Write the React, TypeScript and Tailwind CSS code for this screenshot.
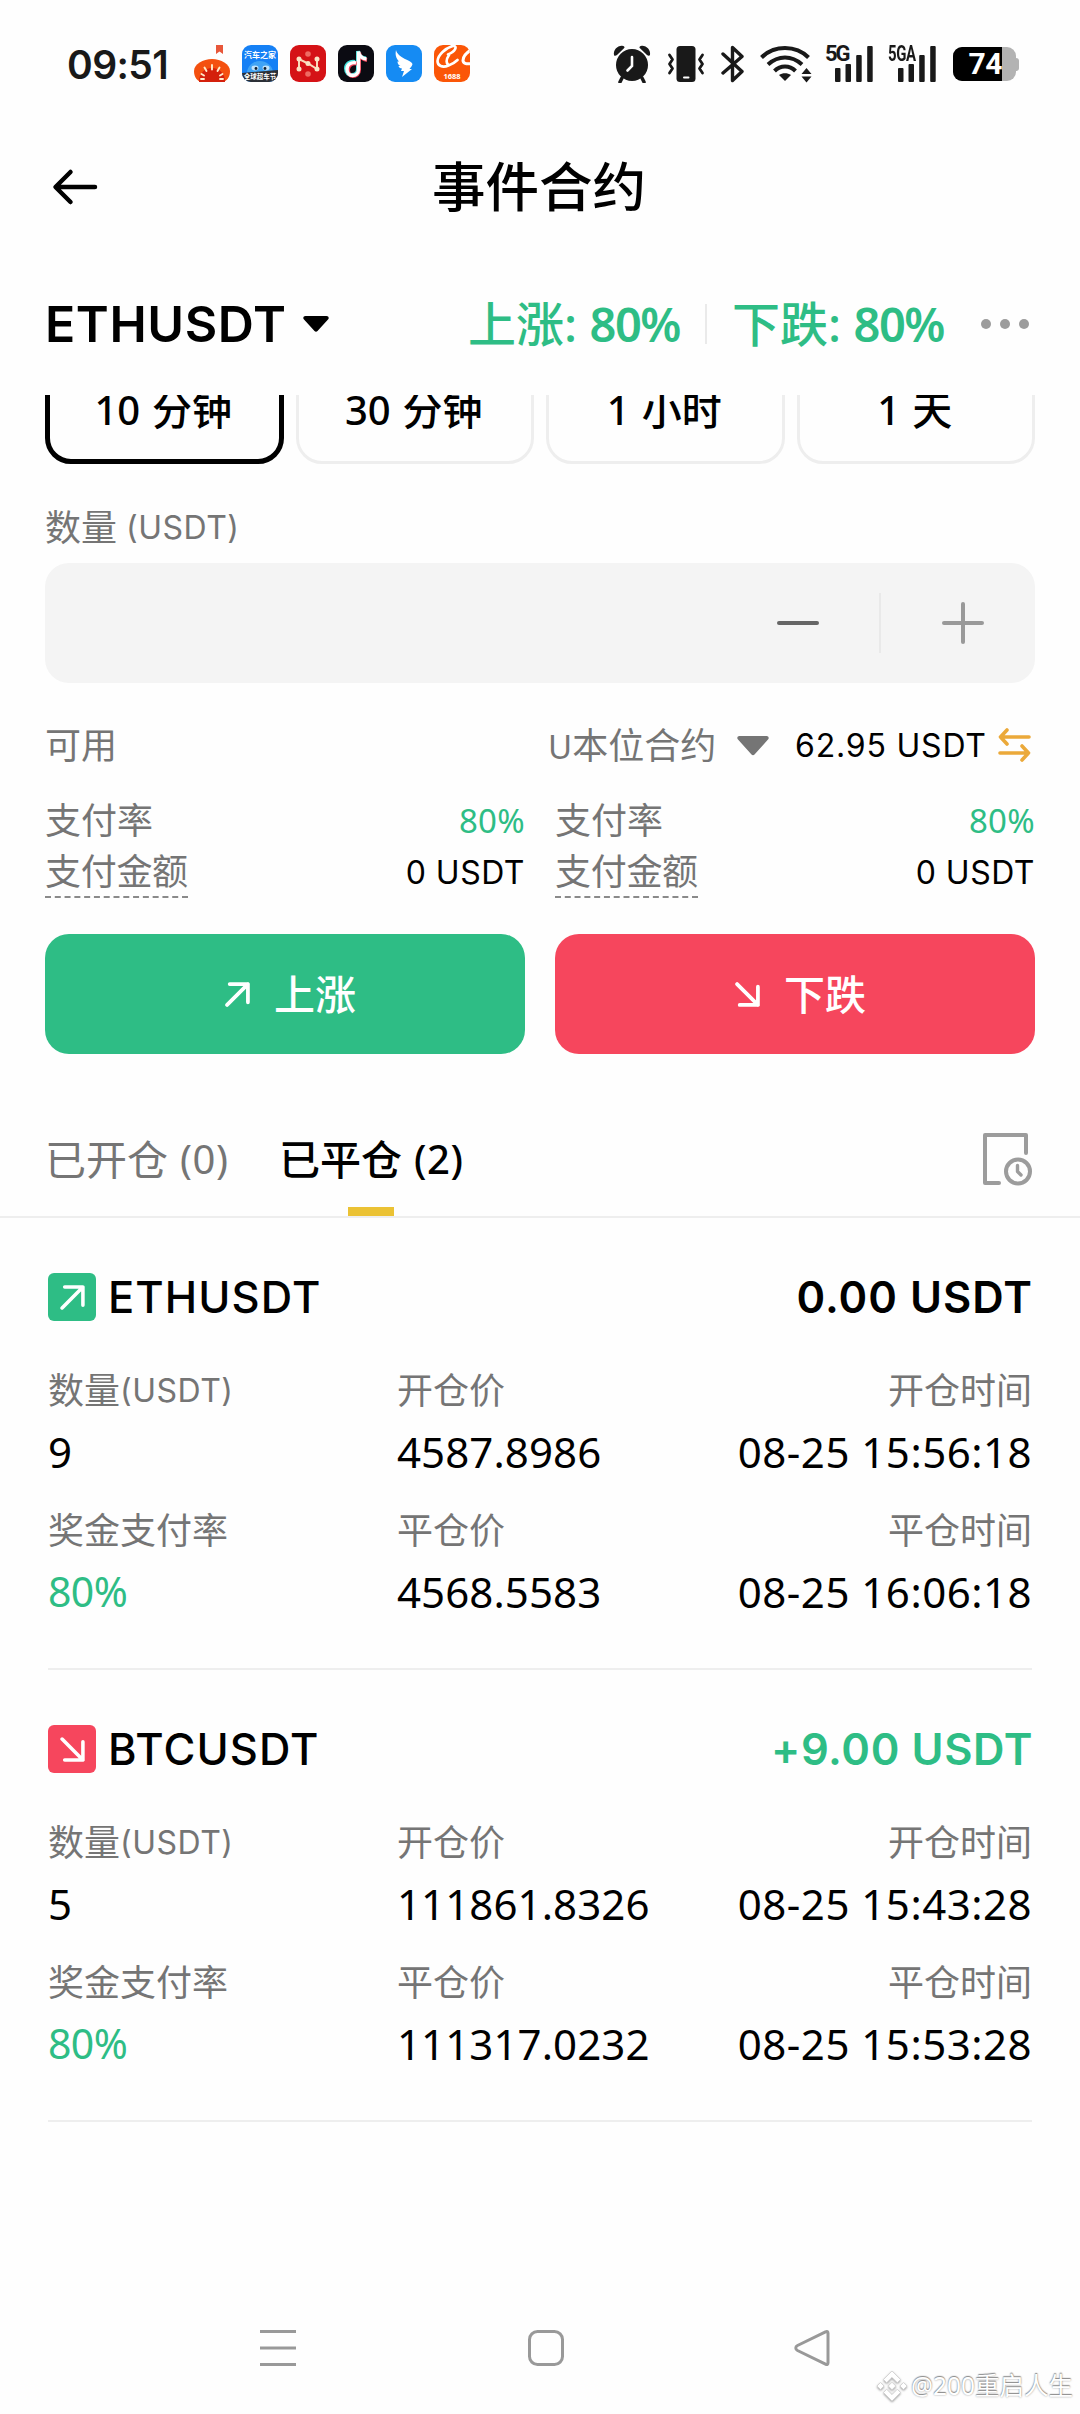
import React from 'react';

function AppIcons() {
  return (
    <div className="flex gap-3">
      <svg width="36" height="38" viewBox="0 0 36 38">
        <path d="M22 0h7v9l-3.500-2.500L22 9z" fill="#e8573a" />
        <path d="M18 14C27 14 36 19 36 26c0 6-3 11-9 11H9c-6 0-9-5-9-11 0-7 9-12 18-12z" fill="#f4500f" />
        <path d="M5 37c0-9 6-14 13-14s13 5 13 14z" fill="#d4200c" />
        <path d="M18 20v4.500M10.500 22.500l2 3.500M25.500 22.500l-2 3.500M7.500 29l2.500 1.500M28.500 29l-2.500 1.500M7 34h3M29 34h-3" stroke="#ffeccb" strokeWidth="1.900" strokeLinecap="round" />
      </svg>
      <div className="relative h-[37px] w-9 overflow-hidden rounded-[9px] bg-[#1580f5]">
        <svg className="absolute inset-0" width="36" height="37" viewBox="0 0 36 37">
          <path d="M5 27c1-7 7-11 13-11s12 4 13 11z" fill="#3fa3f5" />
          <ellipse cx="13" cy="23" rx="3.500" ry="2.400" fill="#bfe2fb" />
          <ellipse cx="24" cy="23" rx="3.500" ry="2.400" fill="#bfe2fb" />
          <circle cx="14" cy="23.500" r="1.400" fill="#112233" />
          <circle cx="23" cy="23.500" r="1.400" fill="#112233" />
          <path d="M0 28l36-3v12H0z" fill="#2b2f36" />
        </svg>
        <div className="absolute inset-x-0 top-[5px] text-center text-[8px] leading-[10px] font-bold whitespace-nowrap text-white">汽车之家</div>
        <div className="absolute inset-x-0 bottom-[1px] text-center text-[6.500px] leading-[8px] font-bold whitespace-nowrap text-white">全球超车节</div>
      </div>
      <svg width="36" height="37" viewBox="0 0 36 37">
        <rect width="36" height="37" rx="9" fill="#d51216" />
        <path d="M9 24V14l9 4.500 9 5.500V14" fill="none" stroke="#f9d9b8" strokeWidth="2" />
        <g fill="#fbe3c4">
          <circle cx="9" cy="14" r="2.500" /><circle cx="9" cy="24" r="2.500" /><circle cx="18" cy="18.500" r="2.500" />
          <circle cx="27" cy="24" r="2.500" /><circle cx="27" cy="14" r="2.500" />
        </g>
        <circle cx="18" cy="9" r="2.800" fill="#ee6b63" />
        <circle cx="18" cy="29" r="2.800" fill="#ee6b63" />
      </svg>
      <svg width="36" height="37" viewBox="0 0 36 37">
        <rect width="36" height="37" rx="9" fill="#0b0b12" />
        <g fill="none" strokeWidth="4">
          <path d="M17 17c-5-1-9 2-9 6.500S11 30 14 30s6-2 6-6V6c.5 4 3.500 7 8 7.500" stroke="#40e0dc" />
          <path d="M19 18.500c-5-1-9 2-9 6S12 31 15 31s6-2 6-6V7.500c.5 4 4 7 8 7.500" stroke="#f0445a" />
          <path d="M18 17.800c-5-1-9 2-9 6.200S11.500 30.500 14.500 30.500s6-2 6-6V6.500c.5 4 3.500 7 8 7.500" stroke="#fff" strokeWidth="3.400" />
        </g>
      </svg>
      <svg width="36" height="37" viewBox="0 0 36 37">
        <rect width="36" height="37" rx="9" fill="#158bf3" />
        <path d="M10 5c1 4 4 6 9 9 4 2 7 3 7.500 5-.5 2-1.800 3.500-3 5h2.500L16 32l2-6h-3l1-2.500c-2 0-3-1-3.500-2.500h2c-2-1-3-2.500-3-4.500h1.500C10 13 9 10 10 5z" fill="#fff" />
      </svg>
      <div className="relative h-[37px] w-9 overflow-hidden rounded-[9px] bg-[#fb5607]">
        <svg className="absolute inset-0" width="36" height="37" viewBox="0 0 36 37" fill="none" stroke="#fff" strokeLinecap="round">
          <path d="M20 .5C11 3 4 10 3.500 16c0 5 5 7 11 4.500 4-1.500 7-3.500 9-5.500" strokeWidth="2.600" />
          <path d="M20 1c3 .5 2 5-6 8.500M15 10c-2 3-3.500 7-1 9.500" strokeWidth="2.600" />
          <path d="M37 5c-5 3-8 7-8 10.500 0 2.500 3 4 8 3" strokeWidth="3" />
        </svg>
        <div className="absolute inset-x-0 bottom-[1px] text-center text-[7.500px] leading-[10px] font-bold text-white">1688</div>
      </div>
    </div>
  );
}

function Signal({ label, labelClass }: { label: string; labelClass: string }) {
  return (
    <div className="relative h-[38px] w-[49px]">
      <span className={labelClass}>{label}</span>
      <svg className="absolute inset-0" width="49" height="38" viewBox="0 0 49 38" fill="#191919">
        <rect x="10" y="23" width="5.500" height="14" rx="1" />
        <rect x="20.500" y="19" width="5.500" height="18" rx="1" />
        <rect x="31.200" y="10" width="5.500" height="27" rx="1" />
        <rect x="42.200" y="1" width="5.500" height="36" rx="1" />
      </svg>
    </div>
  );
}

function StatusBar() {
  return (
    <div className="flex h-32 shrink-0 items-center pl-[67px] text-[#191919]">
      <div className="w-[127px] font-[Inter] text-[39px] leading-none font-semibold tracking-[-0.6px]">09:51</div>
      <AppIcons />
      <svg className="ml-[143px]" width="38" height="38" viewBox="0 0 38 38" fill="#191919">
        <path d="M1 10C0 5 5 0 10 1c1.500.3 2 1.500 1 2.300L4 10C2.800 11 1.300 11.200 1 10zM37 10C38 5 33 0 28 1c-1.500.3-2 1.500-1 2.300L34 10c1.200 1 2.700.8 3 0z" />
        <circle cx="19" cy="20" r="16" />
        <path d="M9 33l-2 4M29 33l2 4" stroke="#191919" strokeWidth="3.500" strokeLinecap="round" />
        <path d="M19 12v9l-4.500 4.500" fill="none" stroke="#fff" strokeWidth="2.600" strokeLinecap="round" />
      </svg>
      <svg className="ml-4" width="38" height="38" viewBox="0 0 38 38">
        <rect x="9.500" y="1" width="19" height="36" rx="3.500" fill="#191919" />
        <rect x="16" y="31.500" width="6.500" height="2" rx="1" fill="#fff" />
        <path d="M2.500 10l3 4.500L2.500 19l3 4.500L2.500 28M35.500 10l-3 4.500 3 4.500-3 4.500 3 4.500" fill="none" stroke="#191919" strokeWidth="2.800" strokeLinecap="round" strokeLinejoin="round" />
      </svg>
      <svg className="ml-4" width="24" height="38" viewBox="0 0 24 38">
        <path d="M2 9l19 17.500-9.500 9V2.500l9.500 9L2 28" fill="none" stroke="#191919" strokeWidth="3.400" strokeLinecap="round" strokeLinejoin="round" />
      </svg>
      <svg className="ml-[15px]" width="52" height="38" viewBox="0 0 52 38">
        <g fill="none" stroke="#191919" strokeWidth="4">
          <path d="M1.500 12.500C8 6 16 3 25 3s17 3 23.500 9.500" />
          <path d="M8 19.500c5-4.500 10.500-7 17-7s12 2.500 17 7" />
          <path d="M14.500 26c3-3 6.500-4.500 10.500-4.500s7.500 1.500 10.500 4.500" />
        </g>
        <path d="M25 36l-6-6c3.500-2.500 8.500-2.500 12 0z" fill="#191919" />
        <path d="M41.500 29l5-6 5 6zM41.500 31.500l5 6 5-6z" fill="#191919" />
      </svg>
      <div className="ml-[13px]">
        <Signal label="5G" labelClass="absolute left-0 top-0 font-[Roboto] text-[22px] leading-[18px] font-bold tracking-[-2px]" />
      </div>
      <div className="ml-[14px]">
        <Signal label="5GA" labelClass="absolute left-0 top-0 inline-block origin-left scale-x-[0.680] font-[Roboto] text-[22px] leading-[18px] font-bold tracking-[-0.5px]" />
      </div>
      <div className="ml-4 flex items-center">
        <div className="relative h-[34px] w-[63px] overflow-hidden rounded-[9px] bg-[#b3b3b3]">
          <div className="flex h-full w-[49px] items-center justify-end bg-black font-[Roboto] text-[30px] leading-none font-bold tracking-[-0.5px] text-white">74</div>
        </div>
        <div className="h-[13px] w-[3px] rounded-r-[3px] bg-[#b3b3b3]" />
      </div>
    </div>
  );
}

function Header() {
  return (
    <div className="flex h-[118px] shrink-0 items-center pl-[52px]">
      <svg width="46" height="38" viewBox="0 0 46 38" fill="none" stroke="#000" strokeWidth="4.500" strokeLinecap="round" strokeLinejoin="round">
        <path d="M43 19H4M18.500 4L3.500 19l15 15" />
      </svg>
      <h1 className="ml-[334px] text-[53.500px] leading-none font-medium">事件合约</h1>
    </div>
  );
}

function PairRow() {
  return (
    <div className="flex h-[149px] shrink-0 items-center pt-[7px]">
      <div className="ml-[45px] w-[258px] font-[Inter] text-[50px] leading-none font-semibold tracking-[0.6px]">ETHUSDT</div>
      <svg width="26" height="16" viewBox="0 0 26 16">
        <path d="M2.500 0h21c2 0 3 2 1.500 3.500L14.500 15c-.8 1-2.200 1-3 0L1 3.500C-.5 2 .5 0 2.500 0z" fill="#000" />
      </svg>
      <div className="ml-[139px] w-[237px] text-[48px] leading-none font-medium whitespace-nowrap text-[#2ebd85]">
        上涨: <span className="text-[47px] font-semibold tracking-[-1.500px]">80%</span>
      </div>
      <div className="h-10 w-[2px] bg-[#eaeaea]" />
      <div className="ml-[25px] w-[249px] text-[48px] leading-none font-medium whitespace-nowrap text-[#2ebd85]">
        下跌: <span className="text-[47px] font-semibold tracking-[-1.500px]">80%</span>
      </div>
      <div className="flex gap-[9px]">
        <i className="size-[10px] rounded-full bg-[#9c9c9c]" />
        <i className="size-[10px] rounded-full bg-[#9c9c9c]" />
        <i className="size-[10px] rounded-full bg-[#9c9c9c]" />
      </div>
    </div>
  );
}

const durations = ['10 分钟', '30 分钟', '1 小时', '1 天'];

function Durations() {
  return (
    <div className="h-[69px] shrink-0 overflow-hidden px-[45px]">
      <div className="-mt-[37px] grid grid-cols-4 gap-3">
        {durations.map((d, i) => (
          <div
            key={d}
            className={
              'flex h-[106px] items-center justify-center rounded-[26px] pr-[2px] pb-[3px] text-[40px] leading-none font-medium [word-spacing:1.500px] ' +
              (i === 0 ? 'border-[5px] border-black' : 'border-[3px] border-[#eeeeee]')
            }
          >
            {d}
          </div>
        ))}
      </div>
    </div>
  );
}

function AmountInput() {
  return (
    <div className="shrink-0 px-[45px]">
      <div className="flex h-[99px] items-center pt-[28px] text-[36px] leading-none text-[#757575]">
        数量<span className="ml-[9px] font-[Inter] text-[32px] tracking-[0.5px]">(USDT)</span>
      </div>
      <div className="flex h-[120px] items-center justify-end rounded-[24px] bg-[#f4f4f4]">
        <div className="h-1 w-[42px] rounded-full bg-[#666666]" />
        <div className="ml-[60px] h-[60px] w-[2px] bg-[#e9e9e9]" />
        <svg className="mr-[51px] ml-[61px]" width="42" height="42" viewBox="0 0 42 42" stroke="#999" strokeWidth="4" strokeLinecap="round">
          <path d="M21 2v38M2 21h38" />
        </svg>
      </div>
    </div>
  );
}

function PayoutColumn() {
  return (
    <div className="text-[36px] leading-none text-[#757575]">
      <div className="flex h-[51px] items-center justify-between">
        <span>支付率</span>
        <span className="text-[33px] tracking-[0.3px] text-[#2ebd85]">80%</span>
      </div>
      <div className="flex h-[52px] items-center justify-between">
        <span className="flex h-full items-center border-b-2 border-dashed border-[#8a8a8a] pt-[2px] tracking-[-0.3px]">支付金额</span>
        <span className="pt-[2px] font-[Inter] text-[32px] tracking-[0.5px] text-black">0 USDT</span>
      </div>
    </div>
  );
}

function Available() {
  return (
    <div className="shrink-0 px-[45px]">
      <div className="flex h-[112px] items-center pt-[14px] text-[36px] leading-none text-[#757575]">
        <span>可用</span>
        <span className="ml-[431px] w-[189px] whitespace-nowrap"><span className="text-[33px]">U</span>本位合约</span>
        <svg width="32" height="20" viewBox="0 0 32 20">
          <path d="M2.500 0h27c2 0 3 2 1.500 3.500L17.500 18.500c-.8 1-2.200 1-3 0L1 3.500C-.5 2 .5 0 2.500 0z" fill="#757575" />
        </svg>
        <span className="ml-[26px] w-[203px] font-[Inter] text-[32px] tracking-[0.8px] whitespace-nowrap text-black">62.95 USDT</span>
        <svg className="-mt-[3px]" width="33" height="34" viewBox="0 0 33 34" fill="none" stroke="#eba93a" strokeWidth="3.600" strokeLinecap="round" strokeLinejoin="round">
          <path d="M31 9H2.500M9 2L2.500 9 9 16M2 25h28.500M24 18l6.500 7-6.500 7" />
        </svg>
      </div>
      <div className="grid grid-cols-2 gap-[30px]">
        <PayoutColumn />
        <PayoutColumn />
      </div>
    </div>
  );
}

function ArrowUp({ size, w }: { size: number; w: number }) {
  return (
    <svg width={size} height={size} viewBox="0 0 24 24" fill="none" stroke="#fff" strokeWidth={w} strokeLinecap="round" strokeLinejoin="round">
      <path d="M2 22L22 2M4.500 2H22v17.500" />
    </svg>
  );
}

function ArrowDown({ size, w }: { size: number; w: number }) {
  return (
    <svg width={size} height={size} viewBox="0 0 24 24" fill="none" stroke="#fff" strokeWidth={w} strokeLinecap="round" strokeLinejoin="round">
      <path d="M2 2l20 20M4.500 22H22V4.500" />
    </svg>
  );
}

function TradeButtons() {
  return (
    <div className="mt-9 grid shrink-0 grid-cols-2 gap-[30px] px-[45px]">
      <button className="flex h-[120px] items-center rounded-[24px] bg-[#2ebd85] pl-[180px] text-[41px] leading-none font-medium text-white">
        <ArrowUp size={25} w={3.6} />
        <span className="ml-6">上涨</span>
      </button>
      <button className="flex h-[120px] items-center rounded-[24px] bg-[#f6465d] pl-[180px] text-[41px] leading-none font-medium text-white">
        <ArrowDown size={25} w={3.6} />
        <span className="ml-6">下跌</span>
      </button>
    </div>
  );
}

function Tabs() {
  return (
    <div className="flex h-[164px] shrink-0 items-stretch border-b-2 border-[#eeeeee] px-[45px] pt-[48px] text-[41px] leading-none whitespace-nowrap">
      <div className="flex w-[234px] items-center text-[#757575]">
        已开仓<span className="ml-3 text-[40px] tracking-[0.6px]">(0)</span>
      </div>
      <div className="relative flex w-[190px] items-center font-medium text-black">
        已平仓<span className="ml-3 text-[40px] tracking-[0.6px]">(2)</span>
        <div className="absolute bottom-0 left-[69px] h-[9px] w-[46px] bg-[#ebc234]" />
      </div>
      <svg className="mr-[3px] ml-auto self-center" width="50" height="54" viewBox="0 0 50 54" fill="none" stroke="#9c9c9c" strokeWidth="4" strokeLinecap="round" strokeLinejoin="round">
        <path d="M44 21V3H3v48h14" />
        <circle cx="36" cy="39.500" r="12" />
        <path d="M35.500 33.500v6l3.500 3.500" strokeWidth="3.400" />
      </svg>
    </div>
  );
}

type Rec = {
  up: boolean; name: string; amount: string; qty: string; open: string; openTime: string; close: string; closeTime: string;
};

const records: Rec[] = [
  { up: true, name: 'ETHUSDT', amount: '0.00 USDT', qty: '9', open: '4587.8986', openTime: '08-25 15:56:18', close: '4568.5583', closeTime: '08-25 16:06:18' },
  { up: false, name: 'BTCUSDT', amount: '+9.00 USDT', qty: '5', open: '111861.8326', openTime: '08-25 15:43:28', close: '111317.0232', closeTime: '08-25 15:53:28' },
];

function LabelRow({ a, b, c }: { a: React.ReactNode; b: string; c: string }) {
  return (
    <div className="grid h-11 grid-cols-[349px_1fr_auto] items-center pt-[2px] text-[36px] leading-none text-[#757575]">
      <span className="flex items-center">{a}</span>
      <span>{b}</span>
      <span>{c}</span>
    </div>
  );
}

function ValueRow({ a, b, c, green }: { a: string; b: string; c: string; green?: boolean }) {
  return (
    <div className="mt-[18px] grid h-11 grid-cols-[349px_1fr_auto] items-center pb-[1px] text-[42px] leading-none text-black">
      <span className={green ? 'text-[41px] tracking-[-0.6px] text-[#2ebd85]' : ''}>{a}</span>
      <span className="tracking-[0.1px]">{b}</span>
      <span className="tracking-[0.5px]">{c}</span>
    </div>
  );
}

function RecordCard({ r }: { r: Rec }) {
  return (
    <div className="mx-12 h-[452px] shrink-0 border-b-2 border-[#eeeeee] pt-[55px]">
      <div className="flex h-12 items-center font-[Inter]">
        <div className={'flex size-12 items-center justify-center rounded-[6px] ' + (r.up ? 'bg-[#2ebd85]' : 'bg-[#f6465d]')}>
          {r.up ? <ArrowUp size={25} w={3.4} /> : <ArrowDown size={25} w={3.4} />}
        </div>
        <div className="ml-3 pt-[2px] text-[43.500px] leading-none font-medium tracking-[1.100px]">{r.name}</div>
        <div className={'-mr-[1px] ml-auto pt-[2px] text-[43.500px] leading-none font-semibold ' + (r.up ? 'tracking-[1px] text-black' : 'tracking-[0.6px] text-[#2ebd85]')}>{r.amount}</div>
      </div>
      <div className="mt-[47px]">
        <LabelRow a={<>数量<span className="font-[Inter] text-[32px] tracking-[0.5px]">(USDT)</span></>} b="开仓价" c="开仓时间" />
        <ValueRow a={r.qty} b={r.open} c={r.openTime} />
      </div>
      <div className="mt-[34px]">
        <LabelRow a="奖金支付率" b="平仓价" c="平仓时间" />
        <ValueRow a="80%" b={r.close} c={r.closeTime} green />
      </div>
    </div>
  );
}

function NavBar() {
  return (
    <div className="mt-auto flex h-[132px] shrink-0 items-center pl-[259px]">
      <svg width="38" height="38" viewBox="0 0 38 38" stroke="#999" strokeWidth="3">
        <path d="M1 2.500h36M1 19h36M1 35.500h36" />
      </svg>
      <svg className="ml-[230px]" width="38" height="38" viewBox="0 0 38 38" fill="none" stroke="#999" strokeWidth="3">
        <rect x="2.500" y="2.500" width="33" height="33" rx="8" />
      </svg>
      <svg className="ml-[228px]" width="38" height="38" viewBox="0 0 38 38" fill="none" stroke="#999" strokeWidth="3" strokeLinejoin="round">
        <path d="M32.500 2.800L4.500 16.500c-2.300 1.200-2.300 3.800 0 5L32.500 35.200c1.600.8 2.500.2 2.500-1.500V4.300c0-1.700-.9-2.300-2.500-1.500z" />
      </svg>
    </div>
  );
}

function Watermark() {
  return (
    <div className="absolute right-[7px] bottom-[10px] flex h-9 items-center text-white [text-shadow:0_-1px_1px_#8a8a8a,0_0_2px_#999]">
      <svg className="drop-shadow-[0_1px_1px_#999]" width="30" height="32" viewBox="0 0 30 32" fill="#fff" stroke="#cfcfcf" strokeWidth="0.800">
        <path d="M15 1l8.500 8.500-3.200 3.200L15 7.400l-5.300 5.300-3.200-3.200zM3.500 12.500L7 16l-3.500 3.500L0 16zM26.500 12.500L30 16l-3.500 3.500L23 16zM15 12.200l3.800 3.800-3.800 3.800-3.800-3.800zM6.500 22.500l3.200-3.200 5.300 5.300 5.300-5.300 3.200 3.200L15 31z" />
      </svg>
      <span className="ml-1 text-[24.500px] leading-none whitespace-nowrap">@200重启人生</span>
    </div>
  );
}

export default function App() {
  return (
    <div className="relative flex h-[2414px] w-[1080px] flex-col overflow-hidden bg-[#fefefe] font-['Noto_Sans','Noto_Sans_CJK_SC',sans-serif] text-black">
      <StatusBar />
      <Header />
      <PairRow />
      <Durations />
      <AmountInput />
      <Available />
      <TradeButtons />
      <Tabs />
      {records.map((r) => (
        <RecordCard key={r.name} r={r} />
      ))}
      <NavBar />
      <Watermark />
    </div>
  );
}
